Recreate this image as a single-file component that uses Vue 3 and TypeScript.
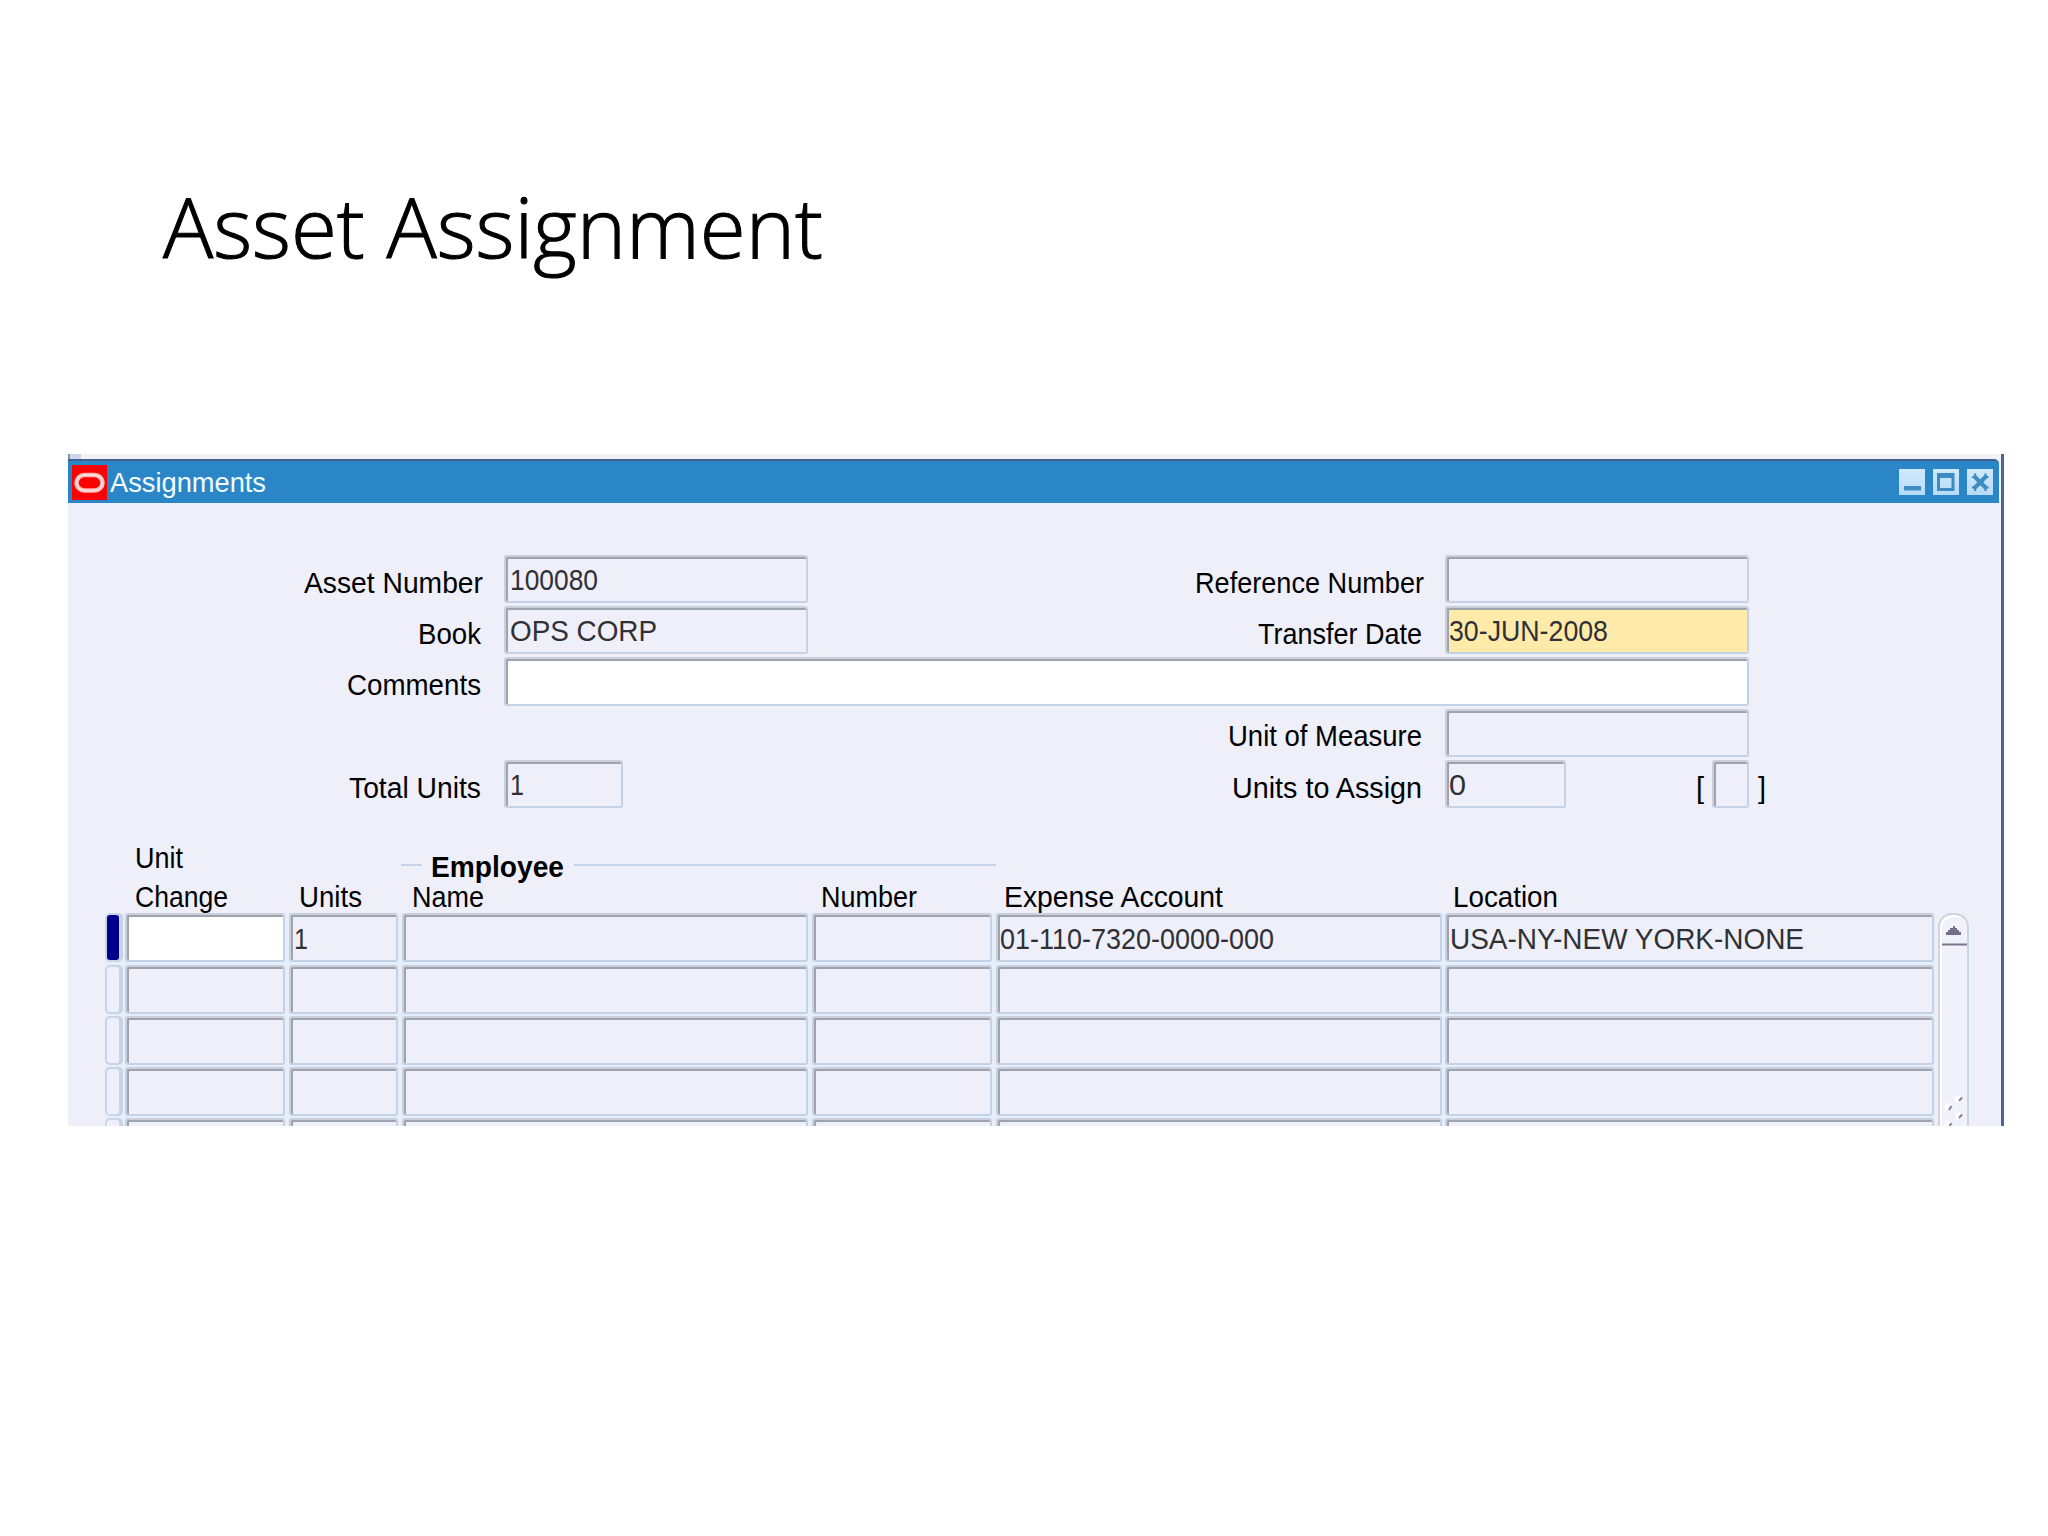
<script setup lang="ts">
import type { Directive } from 'vue'

interface Cell { text?: string; width?: number }
interface Column { key: string; label: string; width: number; pad: number }

// Condenses or widens a line of text to an exact advance width.
const vFit: Directive<HTMLElement, number> = {
  mounted(el, { value }) {
    const natural = el.getBoundingClientRect().width
    if (!natural || !value) return
    el.style.transform = `scaleX(${value / natural})`
    el.style.marginRight = `${value - natural}px`
  },
}

const columns: Column[] = [
  { key: 'change', label: 'Change', width: 93, pad: 9.5 },
  { key: 'units', label: 'Units', width: 63, pad: 9.5 },
  { key: 'name', label: 'Name', width: 72, pad: 10 },
  { key: 'number', label: 'Number', width: 96, pad: 9.5 },
  { key: 'account', label: 'Expense Account', width: 219, pad: 8.5 },
  { key: 'location', label: 'Location', width: 105, pad: 7.5 },
]

const rows: Record<string, Cell>[] = [
  {
    units: { text: '1', width: 14 },
    account: { text: '01-110-7320-0000-000', width: 274 },
    location: { text: 'USA-NY-NEW YORK-NONE', width: 354 },
  },
  {}, {}, {}, {},
]
</script>

<template>
  <main class="slide">
    <h1><span v-fit="660" class="fit">Asset Assignment</span></h1>

    <section class="window">
      <div class="strip"></div>
      <header class="titlebar">
        <svg class="logo" viewBox="0 0 35 35">
          <rect width="35" height="35" fill="#fe0000" />
          <rect x="4.500" y="10" width="26" height="15.500" rx="7.750" fill="none" stroke="#ffb4b4" stroke-width="4.600" />
          <rect x="4.500" y="10" width="26" height="15.500" rx="7.750" fill="none" stroke="#ffdcdc" stroke-width="2" />
        </svg>
        <span v-fit="156" class="fit caption">Assignments</span>
        <div class="controls">
          <i><svg viewBox="0 0 27 26"><rect x="5" y="17" width="17" height="4.500" fill="#3f8cc4" /></svg></i>
          <i><svg viewBox="0 0 27 26"><path d="M4 4h17.500v18H4zM7 9v10h11.500V9z" fill="#3f8cc4" fill-rule="evenodd" /></svg></i>
          <i><svg viewBox="0 0 27 26"><path d="M7 7L19.500 19.500M19.500 7L7 19.500" stroke="#3f8cc4" stroke-width="4" /><path d="M5 8h3V4.500M18.500 4.500V8h3M5 18.500h3V22M18.500 22v-3.500h3" fill="none" stroke="#3f8cc4" stroke-width="2.200" /><rect x="10" y="10" width="6.500" height="6.500" fill="#3f8cc4" /></svg></i>
        </div>
      </header>

      <div class="form">
        <label><span v-fit="179" class="fit">Asset Number</span></label>
        <div class="field"><span v-fit="88" class="fit">100080</span></div>
        <label><span v-fit="229" class="fit">Reference Number</span></label>
        <div class="field"></div>

        <label class="in"><span v-fit="63" class="fit">Book</span></label>
        <div class="field"><span v-fit="147" class="fit">OPS CORP</span></div>
        <label class="in"><span v-fit="164" class="fit">Transfer Date</span></label>
        <div class="field required close"><span v-fit="159" class="fit">30-JUN-2008</span></div>

        <label class="in"><span v-fit="134" class="fit">Comments</span></label>
        <div class="field editable wide"></div>

        <label class="in third"><span v-fit="194" class="fit">Unit of Measure</span></label>
        <div class="field"></div>

        <label class="in"><span v-fit="132" class="fit">Total Units</span></label>
        <div class="field short total"><span v-fit="14" class="fit">1</span></div>
        <label class="in"><span v-fit="190" class="fit">Units to Assign</span></label>
        <div class="assign">
          <div class="field short close"><span v-fit="17" class="fit">0</span></div>
          <span class="bracket open">[</span>
          <div class="field flag"></div>
          <span class="bracket">]</span>
        </div>
      </div>

      <div class="heads-top">
        <span v-fit="48" class="fit unit">Unit</span>
        <div class="group">
          <hr class="lead">
          <b v-fit="133" class="fit">Employee</b>
          <hr>
        </div>
      </div>
      <div class="block">
        <div class="grid-area">
          <div class="heads">
            <span></span>
            <div v-for="c in columns" :key="c.key" :style="{ paddingLeft: c.pad + 'px' }">
              <span v-fit="c.width" class="fit">{{ c.label }}</span>
            </div>
          </div>
          <div class="rows">
            <div v-for="(row, i) in rows" :key="i" class="row">
              <div class="marker" :class="{ current: i === 0 }"></div>
              <div
                v-for="(c, j) in columns"
                :key="c.key"
                class="field cell"
                :class="{ editable: i === 0 && j === 0, close: c.key === 'account' }"
              >
                <span v-if="row[c.key]" v-fit="row[c.key].width ?? 0" class="fit">{{ row[c.key].text }}</span>
              </div>
            </div>
          </div>
        </div>
        <div class="scroll">
          <svg width="31" height="34" viewBox="0 0 31 34">
            <path d="M15 13h2v2h2v2h2v2h2v3H8v-3h2v-2h2v-2h3z" fill="#71728a" />
            <path d="M4 31.500h25" stroke="#77788e" stroke-width="2" />
          </svg>
          <svg width="31" height="36" viewBox="0 0 31 36">
            <g fill="#fff">
              <circle cx="20.500" cy="6" r="3.500" /><circle cx="10" cy="13.500" r="3.500" />
              <circle cx="20.500" cy="23" r="3.500" /><circle cx="10" cy="31.500" r="3.500" />
            </g>
            <path d="M21 8l3-3.500M11 17l2.500-4M21 25l3-3.500M11 34l2.500-4" stroke="#858694" stroke-width="2" />
          </svg>
        </div>
      </div>
    </section>
  </main>
</template>

<style>
body { margin: 0; background: #fff; }
</style>

<style scoped>
* { box-sizing: border-box; }
.slide {
  width: 2048px;
  height: 1536px;
  overflow: hidden;
  background: #fff;
  color: #000;
  font: 29.5px/48px "Liberation Sans", Arial, sans-serif;
}
.fit {
  display: inline-block;
  flex: none;
  white-space: pre;
  transform-origin: 0 50%;
}
h1 {
  height: 120px;
  margin: 166px 0 0 163px;
  font: 300 83px/120px "Open Sans", "Noto Sans", sans-serif;
  -webkit-text-stroke: 1.1px #000;
}
.window {
  width: 1936px;
  height: 672px;
  margin: 168px 0 0 68px;
  overflow: hidden;
  background: #eeeff8;
  border-right: 3px solid #4a6890;
}
.strip {
  height: 5px;
  border-left: 2px solid #8b90a0;
  background: linear-gradient(90deg, #cbd7e8 11px, #f1f2f8 11px);
}
.titlebar {
  display: flex;
  align-items: center;
  width: 1931px;
  height: 44px;
  padding: 1px 6px 0 4px;
  border-top: 2px solid #44608c;
  border-top-right-radius: 5px;
  background: #2a86c7;
}
.logo { flex: none; width: 35px; height: 35px; }
.caption {
  margin-left: 3px;
  color: #f2fbff;
  font-size: 28px;
  line-height: 40px;
}
.controls { display: flex; gap: 7.5px; margin: -1px 0 0 auto; }
.controls i {
  width: 26.500px;
  height: 26px;
  background: linear-gradient(#d0e9fd, #b6dbf8);
}
.controls svg { display: block; width: 27px; height: 26px; }

.form {
  display: grid;
  grid-template-columns: 436px 304px 637px 304px;
  grid-auto-rows: 48.2px;
  row-gap: 3.1px;
  padding-top: 51.8px;
}
.form label {
  display: flex;
  justify-content: flex-end;
  min-width: 0;
  padding: 3.8px 21px 0 0;
}
.form label.in { padding-right: 23px; }
.wide { grid-column: 2 / 5; }
.third { grid-column: 3; }

.field {
  display: flex;
  min-width: 0;
  height: 48.2px;
  padding: 0 0 0 4px;
  border: 2px solid #c3d2e6;
  border-top-color: #c9cfdd;
  border-left-color: #c9cfdd;
  border-radius: 3px;
  background: #eeeff8;
  box-shadow: inset 2px 2px 0 #9ea3ae;
  color: #303036;
  line-height: 46px;
}
.field.close { padding-left: 2px; }
.required { background: #feeba9; }
.editable { background: #fff; }
.short { width: 121px; }
.total { width: 119px; }
.assign { display: flex; width: 322px; }
.bracket { width: 9px; padding-top: 4px; font-size: 29px; }
.bracket.open { margin: 0 7px 0 auto; }
.flag { width: 37px; margin-right: 9px; }

.heads-top {
  display: flex;
  height: 56px;
  margin-top: 25.800px;
  padding-left: 66.500px;
  line-height: 47px;
}
.unit { height: 47px; }
.group {
  display: flex;
  flex: none;
  align-items: flex-start;
  width: 595px;
  margin-left: 218px;
  line-height: 65px;
}
.group b { margin-left: 9px; }
.group hr {
  flex: 1;
  height: 2px;
  margin: 30px 0 0 10px;
  border: 0;
  background: #c5d3ea;
}
.group hr.lead { flex: none; width: 21px; margin-left: 0; }

.block { display: flex; gap: 3px; height: 240px; padding-left: 36.500px; }
.grid-area { flex: none; width: 1830px; }
.heads, .row {
  display: grid;
  grid-template-columns: 17px 160px 109px 406px 180px 446px 489px;
  column-gap: 3.830px;
}
.row { grid-template-columns: 16.500px 160px 109.500px 406px 180px 446px 489px; }
.heads { height: 23.500px; line-height: 0; }
.heads > div { padding-top: 7px; }
.rows {
  display: grid;
  row-gap: 2.200px;
  background: #e7eefb;
}
.row { height: 49px; }
.cell { height: 49px; padding-left: 3px; line-height: 47px; }
.marker {
  border: 2px solid #c6d5e9;
  border-radius: 5px;
  background: #eeeff8;
  box-shadow: 2px 0 0 #c8d1e2;
}
.marker.current { background: #00008c; }
.scroll {
  display: flex;
  flex-direction: column;
  justify-content: space-between;
  width: 31px;
  height: 216px;
  margin-top: 23.500px;
  border: 2px solid #ced3e2;
  border-bottom: 0;
  border-radius: 14px 14px 0 0;
  background: #f0f1fa;
  box-shadow: inset 2px 2px 0 #fff;
}
.scroll svg { display: block; margin-left: -2px; }
.scroll svg:first-child { margin-top: -2px; }
</style>
